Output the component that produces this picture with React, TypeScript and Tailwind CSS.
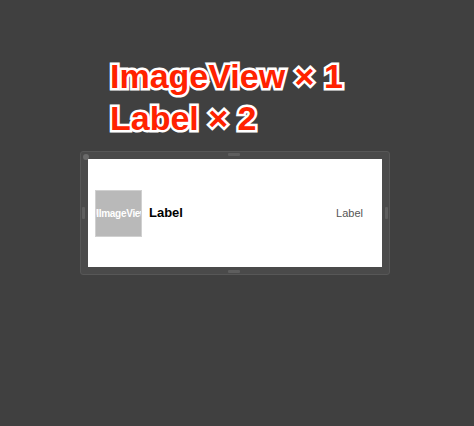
const outlined =
  'text-[#ff2200] font-bold [paint-order:stroke_fill] [-webkit-text-stroke:5px_#ffffff]';

function Handle({ className }: { className: string }) {
  return <div className={`absolute bg-[#5e5e5e] ${className}`} />;
}

export default function App() {
  return (
    <div
      className="w-[474px] h-[426px] bg-[#404040] overflow-hidden"
      style={{ fontFamily: '"Liberation Sans", Arial, sans-serif' }}
    >
      <div className="pl-[110px] pt-[55px] flex flex-col">
        <div className={`${outlined} text-[34px] leading-[42px]`}>ImageView × 1</div>
        <div className={`${outlined} text-[34px] leading-[42px]`}>Label × 2</div>
      </div>

      <div className="ml-[80px] mt-[12px] w-[310px] h-[124px] relative rounded-[3px] bg-[#4a4a4a] border border-[#575757] p-[7px]">
        <div className="absolute left-[2px] top-[2px] w-[6px] h-[6px] rounded-full bg-[#6a6a6a]" />
        <Handle className="left-[147px] top-[1px] w-[12px] h-[3px] rounded-[1px]" />
        <Handle className="left-[147px] bottom-[1px] w-[12px] h-[3px] rounded-[1px]" />
        <Handle className="left-[1px] top-[55px] w-[3px] h-[12px] rounded-[1px]" />
        <Handle className="right-[1px] top-[55px] w-[3px] h-[12px] rounded-[1px]" />

        <div className="w-full h-full bg-white flex items-center pl-[7px] pr-[19px]">
          <div className="w-[47px] h-[47px] bg-[#b9b9b9] border border-[#d0d0d0] flex items-center justify-center overflow-hidden">
            <span className="text-white font-bold text-[10px] whitespace-nowrap tracking-[-0.3px]">UIImageView</span>
          </div>
          <span className="ml-[7px] text-black font-bold text-[13px]">Label</span>
          <span className="ml-auto text-[#555555] text-[11px]">Label</span>
        </div>
      </div>
    </div>
  );
}
